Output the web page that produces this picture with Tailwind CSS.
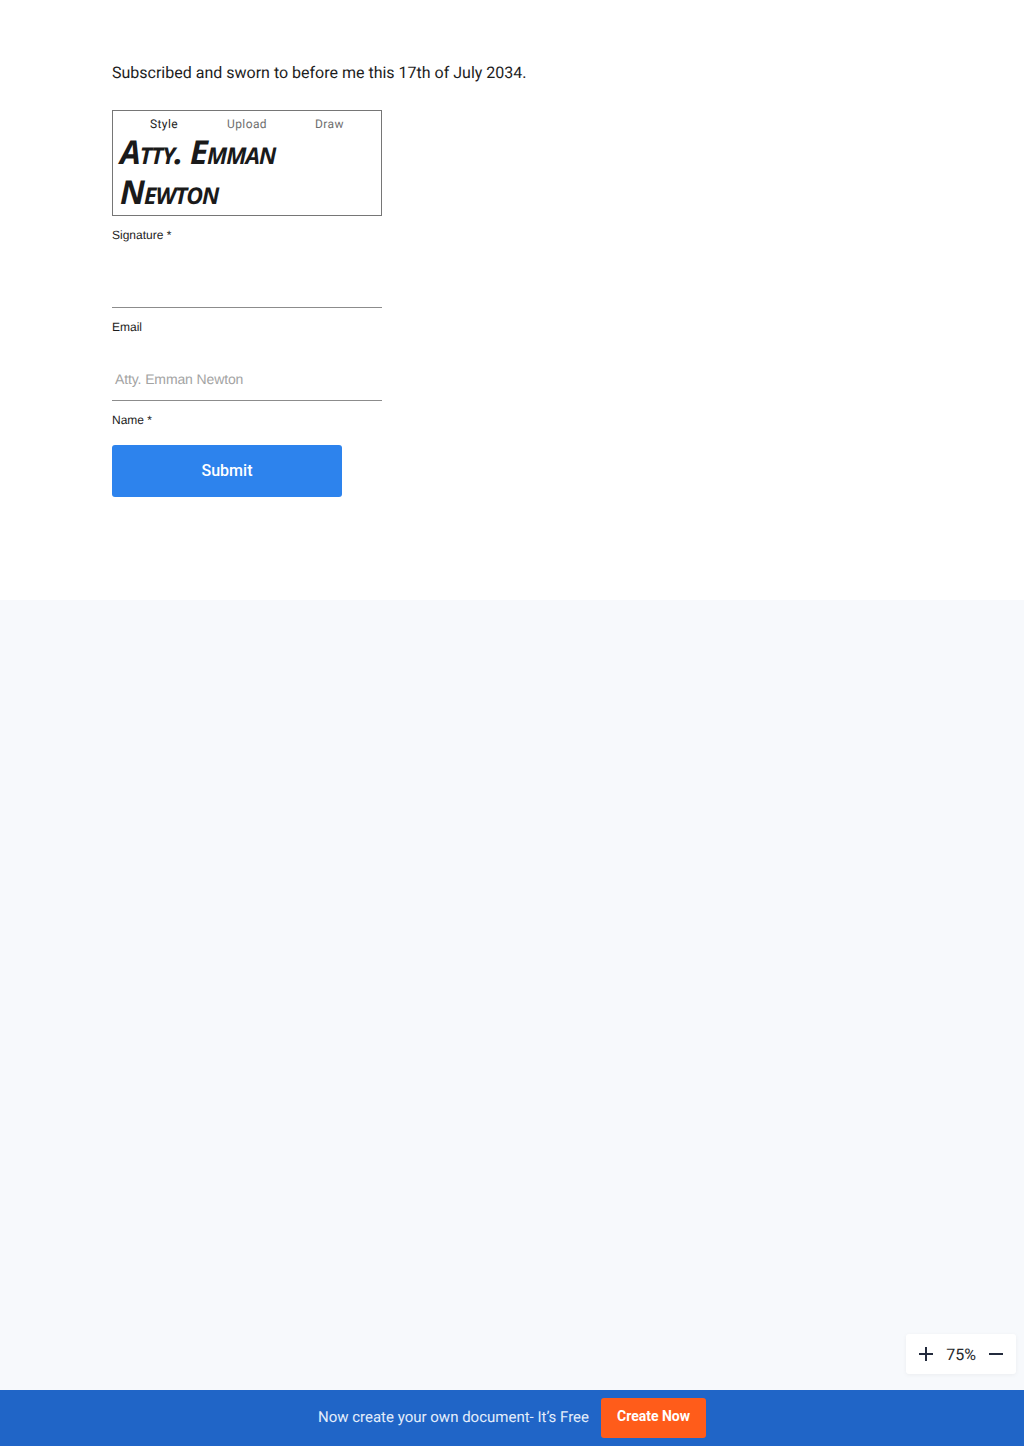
<!DOCTYPE html>
<html lang="en">
<head>
    <meta charset="UTF-8">
    <title>Document</title>
    <script src="https://cdn.jsdelivr.net/npm/@tailwindcss/browser@4"></script>
</head>
<body class="h-[1446px] flex flex-col overflow-hidden bg-white font-['Roboto',sans-serif] [text-rendering:geometricPrecision]">
<!-- Document -->
<div class="h-[600px] shrink-0 bg-white pl-[112px] pt-[62px]">
    <p class="text-[16px] leading-[21px] text-[#1d1d1d]">Subscribed and sworn to before me this 17th of July 2034.</p>

    <div class="mt-[27px] w-[270px] h-[106px] border border-[#767676] px-[7px] pt-[6px]">
        <div class="flex text-[12px] leading-[14px] tracking-[0.4px] text-[#6f6f6f]">
            <span class="w-[88px] pl-[30px] text-[#1d1d1d]">Style</span>
            <span class="w-[88px] pl-[19px]">Upload</span>
            <span class="pl-[19px]">Draw</span>
        </div>
        <div class="mt-[1px] w-[190px] font-['Open_Sans',sans-serif] font-bold italic text-[33px] leading-[40px] tracking-[-1px] [font-variant:small-caps] text-[#1a1a1a]">Atty. Emman Newton</div>
    </div>
    <label class="block mt-[12px] font-['Liberation_Sans',sans-serif] text-[12px] leading-[14px] text-[#1d1d1d]">Signature *</label>

    <div class="mt-[65px] w-[270px] border-b border-[#8c8c8c]"></div>
    <label class="block mt-[12px] font-['Liberation_Sans',sans-serif] text-[12px] leading-[14px] text-[#1d1d1d]">Email</label>

    <div class="mt-[33px] w-[270px] h-[34px] border-b border-[#8c8c8c] pl-[3px] font-['Liberation_Sans',sans-serif] text-[14px] leading-[24px] tracking-[-0.12px] text-[#a3a3a3]">Atty. Emman Newton</div>
    <label class="block mt-[12px] font-['Liberation_Sans',sans-serif] text-[12px] leading-[14px] text-[#1d1d1d]">Name *</label>

    <button class="block mt-[18px] w-[230px] h-[52px] rounded-[3px] bg-[#2d83ed] text-white text-[16px] font-medium">Submit</button>
</div>

<!-- Empty page area with zoom control -->
<div class="flex-1 relative bg-[#f7f9fc]">
    <div class="absolute right-[8px] bottom-[16px] w-[110px] h-[40px] rounded-[3px] bg-white shadow-[0_1px_4px_rgba(0,0,0,0.05)] flex items-center justify-between px-[13px] text-[#2a3040]">
        <svg width="14" height="14" viewBox="0 0 14 14" fill="none" stroke="#232b3d" stroke-width="2"><path d="M7 0v14M0 7h14"/></svg>
        <span class="pt-[1px] text-[16px] text-[#26282c]">75%</span>
        <svg width="14" height="14" viewBox="0 0 14 14" fill="none" stroke="#232b3d" stroke-width="2"><path d="M0 7h14"/></svg>
    </div>
</div>

<!-- Bottom banner -->
<div class="h-[56px] shrink-0 bg-[#2065c7] flex items-center justify-center gap-[12px]">
    <span class="pb-[2px] text-[15px] text-[#e3edfb]">Now create your own document- It’s Free</span>
    <button class="w-[105px] h-[40px] pb-[3px] rounded-[3px] bg-[#ff5c1a] text-white text-[14px] font-bold">Create Now</button>
</div>
</body>
</html>
